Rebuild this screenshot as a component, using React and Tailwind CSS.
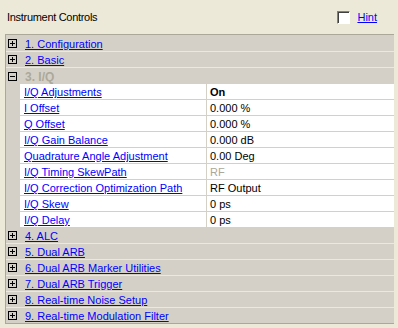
import React from "react";

function Box({ minus }) {
  return (
    <span className="relative ml-[2px] mr-[8px] inline-block h-[9px] w-[9px] shrink-0 border border-black">
      <span className="absolute left-[1px] top-[3px] h-[1px] w-[5px] bg-black" />
      {!minus && <span className="absolute left-[3px] top-[1px] h-[5px] w-[1px] bg-black" />}
    </span>
  );
}

function HeaderRow({ label, first, last }) {
  return (
    <div
      className={
        "flex items-center bg-[#d4d0c8] border-b " +
        (last ? "border-[#aca899] h-[16px]" : "border-[#ece9d8] ") +
        (first ? "h-[17px]" : last ? "" : "h-[16px]")
      }
    >
      <Box />
      <a className="pt-[2px] text-[#0000ff] underline leading-none">{label}</a>
    </div>
  );
}

const rows = [
  ["I/Q Adjustments", "On", "bold"],
  ["I Offset", "0.000 %"],
  ["Q Offset", "0.000 %"],
  ["I/Q Gain Balance", "0.000 dB"],
  ["Quadrature Angle Adjustment", "0.00 Deg"],
  ["I/Q Timing SkewPath", "RF", "grey"],
  ["I/Q Correction Optimization Path", "RF Output"],
  ["I/Q Skew", "0 ps"],
  ["I/Q Delay", "0 ps"],
];

export default function App() {
  return (
    <div
      className="relative h-[328px] w-[398px] overflow-hidden bg-[#ece9d8] text-[11px] text-black"
      style={{ fontFamily: '"Liberation Sans", Arial, sans-serif' }}
    >
      <div className="flex h-[34px] items-center pl-[7px] pr-[21px]">
        <span className="tracking-[-0.3px]">Instrument Controls</span>
        <div className="ml-auto flex items-center">
          <span className="box-border h-[13px] w-[13px] border border-t-[#808080] border-l-[#808080] border-b-white border-r-white bg-white shadow-[inset_1px_1px_0_#404040]" />
          <a className="ml-[7px] text-[#0000ff] underline">Hint</a>
        </div>
      </div>
      <div className="ml-[5px] w-[389px] border-t border-l border-[#aca899]">
        <HeaderRow label="1. Configuration" first />
        <HeaderRow label="2. Basic" />
        <div className="flex h-[16px] items-center bg-[#d4d0c8]">
          <Box minus />
          <span className="pt-[2px] font-bold text-[#aca899] text-[12px] leading-none">3. I/Q</span>
        </div>
        <div className="bg-[#d4d0c8] pl-[14px]">
          {rows.map(([l, v, s]) => (
            <div key={l} className="flex h-[16px] border-b border-[#d4d0c8] bg-white">
              <div className="flex w-[186px] items-center pl-[4px]">
                <a className="pt-[2px] text-[#0000ff] underline leading-none">{l}</a>
              </div>
              <div
                className={
                  "flex flex-1 items-center border-l border-[#d4d0c8] pl-[3px] pt-[2px] leading-none " +
                  (s === "bold" ? "font-bold" : s === "grey" ? "text-[#aca899]" : "")
                }
              >
                {v}
              </div>
            </div>
          ))}
        </div>
        <HeaderRow label="4. ALC" />
        <HeaderRow label="5. Dual ARB" />
        <HeaderRow label="6. Dual ARB Marker Utilities" />
        <HeaderRow label="7. Dual ARB Trigger" />
        <HeaderRow label="8. Real-time Noise Setup" />
        <HeaderRow label="9. Real-time Modulation Filter" last />
      </div>
    </div>
  );
}
